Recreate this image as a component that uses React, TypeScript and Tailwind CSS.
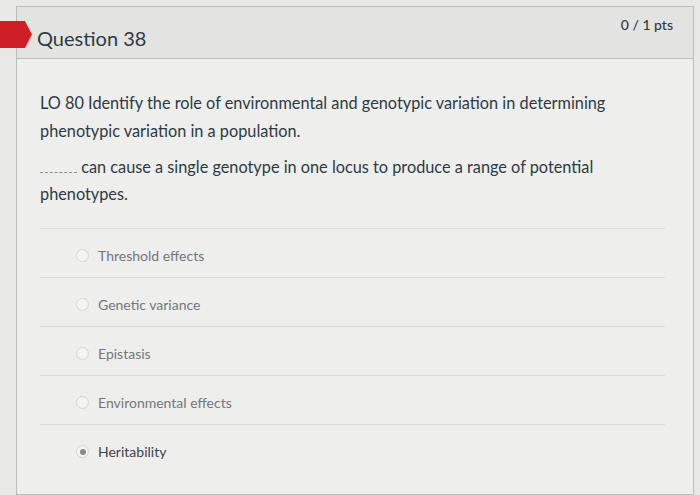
const answers = [
  { label: "Threshold effects", selected: false },
  { label: "Genetic variance", selected: false },
  { label: "Epistasis", selected: false },
  { label: "Environmental effects", selected: false },
  { label: "Heritability", selected: true },
];

function Radio({ selected }: { selected: boolean }) {
  return (
    <span className="flex h-[13px] w-[13px] items-center justify-center rounded-full border border-[#d4d4d2] bg-[#f4f4f2]">
      {selected && <span className="h-[6px] w-[6px] rounded-full bg-[#8a8a8a]" />}
    </span>
  );
}

export default function App() {
  return (
    <div className="relative h-[495px] w-[700px] overflow-hidden bg-[#e8e8e6] pl-[16px] pr-[6px] pt-[6px] font-['Lato',sans-serif]">
      {/* red flag marker */}
      <div className="absolute left-0 top-[21px] h-[27px] w-[32px] bg-[#cf1f26] [clip-path:polygon(0_0,78%_0,100%_50%,78%_100%,0_100%)]" />

      <div className="flex h-[489px] flex-col border border-[#bcbcba] bg-[#eeeeec]">
        {/* Header */}
        <div className="flex h-[52px] shrink-0 items-start justify-between border-b border-[#bcbcba] bg-[#e3e3e1] pl-[20px] pr-[20px]">
          <h2 className="mt-[18px] text-[20px] leading-[26px] text-[#2d3b45]">Question 38</h2>
          <span className="mt-[8px] text-[14px] font-medium leading-[20px] text-[#2d3b45]">0 / 1 pts</span>
        </div>

        {/* Body */}
        <div className="px-[23px] pt-[30px]">
          <div className="w-[610px] text-[16.3px] leading-[28px] text-[#2d3b45]">
            <p>
              LO 80 Identify the role of environmental and genotypic variation in determining
              phenotypic variation in a population.
            </p>
            <p className="mt-[8px] leading-[27px]">
              <span className="inline-block h-[8px] w-[37px] border-b-[1.5px] border-dashed border-[#8a8a8a] align-baseline" />{" "}
              can cause a single genotype in one locus to produce a range of potential phenotypes.
            </p>
          </div>

          <div className="mt-[21px] mr-[5px]">
            {answers.map((a) => (
              <div
                key={a.label}
                className="flex h-[49px] items-center gap-[9px] border-t border-[#d9d9d7] pl-[36px] pt-[5px]"
              >
                <Radio selected={a.selected} />
                <span
                  className={
                    a.selected
                      ? "text-[14px] leading-[20px] text-[#3d4448]"
                      : "text-[14px] leading-[20px] text-[#73777a]"
                  }
                >
                  {a.label}
                </span>
              </div>
            ))}
          </div>
        </div>
      </div>
    </div>
  );
}
